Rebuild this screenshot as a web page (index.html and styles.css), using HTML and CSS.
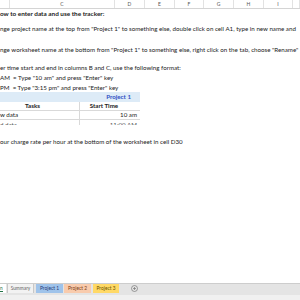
FILE: index.html
```html
<!DOCTYPE html>
<html lang="en">
<head>
    <meta charset="UTF-8">
    <meta name="viewport" content="width=device-width, initial-scale=1.0">
    <title>Time Tracker - Instructions</title>
    <link rel="stylesheet" href="styles.css">
</head>
<body>
    <div class="sheet">
        <div class="col-heads">
            <div class="col-head"></div>
            <div class="col-head">C</div>
            <div class="col-head">D</div>
            <div class="col-head">E</div>
            <div class="col-head">F</div>
            <div class="col-head">G</div>
            <div class="col-head">H</div>
            <div class="col-head">I</div>
            <div class="col-head"></div>
        </div>

        <div class="cells">
            <div class="line title">ow to enter data and use the tracker:</div>
            <div class="line step-1">nge project name at the top from "Project 1" to something else, double click on cell A1, type in new name and</div>
            <div class="line step-2">nge worksheet name at the bottom from "Project 1" to something else, right click on the tab, choose "Rename"</div>
            <div class="line step-3">er time start and end in columns B and C, use the following format:</div>
            <div class="line">AM&nbsp; = Type "10 am" and press "Enter" key</div>
            <div class="line pm">PM&nbsp; = Type "3:15 pm" and press "Enter" key</div>

            <div class="tracker">
                <div class="tracker-band">Project 1</div>
                <div class="tracker-row tracker-head">
                    <div class="cell task">Tasks</div>
                    <div class="cell time">Start Time</div>
                </div>
                <div class="tracker-row">
                    <div class="cell task">w data</div>
                    <div class="cell time">10 am</div>
                </div>
                <div class="tracker-row clipped">
                    <div class="cell task">d data</div>
                    <div class="cell time">11:00 AM</div>
                </div>
            </div>

            <div class="line charge">our charge rate per hour at the bottom of the worksheet in cell D30</div>
        </div>

        <div class="tab-bar">
            <div class="tab active"><span>n</span></div>
            <div class="tab summary">Summary</div>
            <div class="tab project-1">Project 1</div>
            <div class="tab project-2">Project 2</div>
            <div class="tab project-3">Project 3</div>
            <div class="add-sheet">
                <svg width="7" height="7" viewBox="0 0 7 7">
                    <circle cx="3.5" cy="3.5" r="3" fill="none" stroke="#7a7a7a" stroke-width="0.7"/>
                    <path d="M3.5 2v3M2 3.5h3" stroke="#7a7a7a" stroke-width="0.7"/>
                </svg>
            </div>
        </div>
        <div class="status-strip"></div>
    </div>
</body>
</html>
```

FILE: styles.css
```css
* {
    margin: 0;
    padding: 0;
    box-sizing: border-box;
}

body {
    font-family: Lato, 'Liberation Sans', sans-serif;
    background: #ffffff;
    color: #222222;
    width: 300px;
    height: 300px;
    overflow: hidden;
}

.sheet {
    display: flex;
    flex-direction: column;
    height: 300px;
}

/* column letters */
.col-heads {
    display: grid;
    grid-template-columns: 10px 105px 30px 30px 29px 30px 30px 29px 1fr;
    height: 9px;
    border-bottom: 1px solid #d4d4d4;
    background: #ffffff;
}

.col-head {
    border-right: 1px solid #e2e2e2;
    font-size: 5px;
    line-height: 8px;
    text-align: center;
    color: #555555;
}

/* sheet body */
.cells {
    flex: 1;
    overflow: hidden;
}

.line {
    height: 10px;
    line-height: 10px;
    font-size: 6.2px;
    white-space: nowrap;
}

.title {
    font-weight: 700;
    font-size: 6.4px;
}

.step-1 {
    margin-top: 5px;
}

.step-2 {
    margin-top: 11px;
}

.step-3 {
    margin-top: 8px;
}

.pm {
    height: 9px;
    line-height: 9px;
}

.charge {
    margin-top: 12px;
}

/* tracker table */
.tracker {
    width: 140px;
    font-size: 6.2px;
}

.tracker-band {
    height: 10px;
    line-height: 10px;
    background: #ddebf7;
    color: #2f4fc4;
    font-weight: 700;
    text-align: right;
    padding-right: 9px;
}

.tracker-row {
    display: grid;
    grid-template-columns: 80px 60px;
    height: 9px;
    border-bottom: 1px solid #d9d9d9;
}

.tracker-row .cell {
    line-height: 8px;
    white-space: nowrap;
}

.tracker-row .task {
    border-right: 1px solid #d9d9d9;
}

.tracker-row .time {
    text-align: right;
    padding-right: 3px;
}

.tracker-head .cell {
    font-weight: 700;
    text-align: center;
}

.tracker-head .task {
    padding-right: 14px;
}

.tracker-head .time {
    padding-right: 12px;
}

.tracker-row.clipped {
    height: 5px;
    border-bottom: none;
    overflow: hidden;
}

.tracker-row.clipped .cell {
    line-height: 9px;
    color: #555555;
}

/* sheet tabs */
.tab-bar {
    display: flex;
    align-items: flex-start;
    height: 12px;
    background: #e4e4e4;
    border-top: 1px solid #cdcdcd;
    font-size: 4.8px;
}

.tab {
    height: 9px;
    line-height: 9px;
    text-align: center;
    white-space: nowrap;
}

.tab.active {
    width: 6px;
    background: #ffffff;
    color: #217346;
    text-align: left;
}

.tab.active span {
    border-bottom: 1px solid #217346;
}

.tab.summary {
    width: 27px;
    margin-left: 1px;
    background: #f2f2f2;
    color: #666666;
    border-left: 1px solid #c8c8c8;
    border-right: 1px solid #c8c8c8;
}

.tab.project-1 {
    width: 27px;
    margin-left: 2px;
    background: #9fc3ea;
    color: #1f3a78;
}

.tab.project-2 {
    width: 27px;
    margin-left: 1px;
    background: #f8cbad;
    color: #7a3c14;
}

.tab.project-3 {
    width: 26px;
    margin-left: 2px;
    background: #ffd966;
    color: #6b5200;
}

.add-sheet {
    margin-left: 12px;
    height: 9px;
    display: flex;
    align-items: center;
}

.status-strip {
    height: 5px;
    background: #f0f0f0;
}
```
